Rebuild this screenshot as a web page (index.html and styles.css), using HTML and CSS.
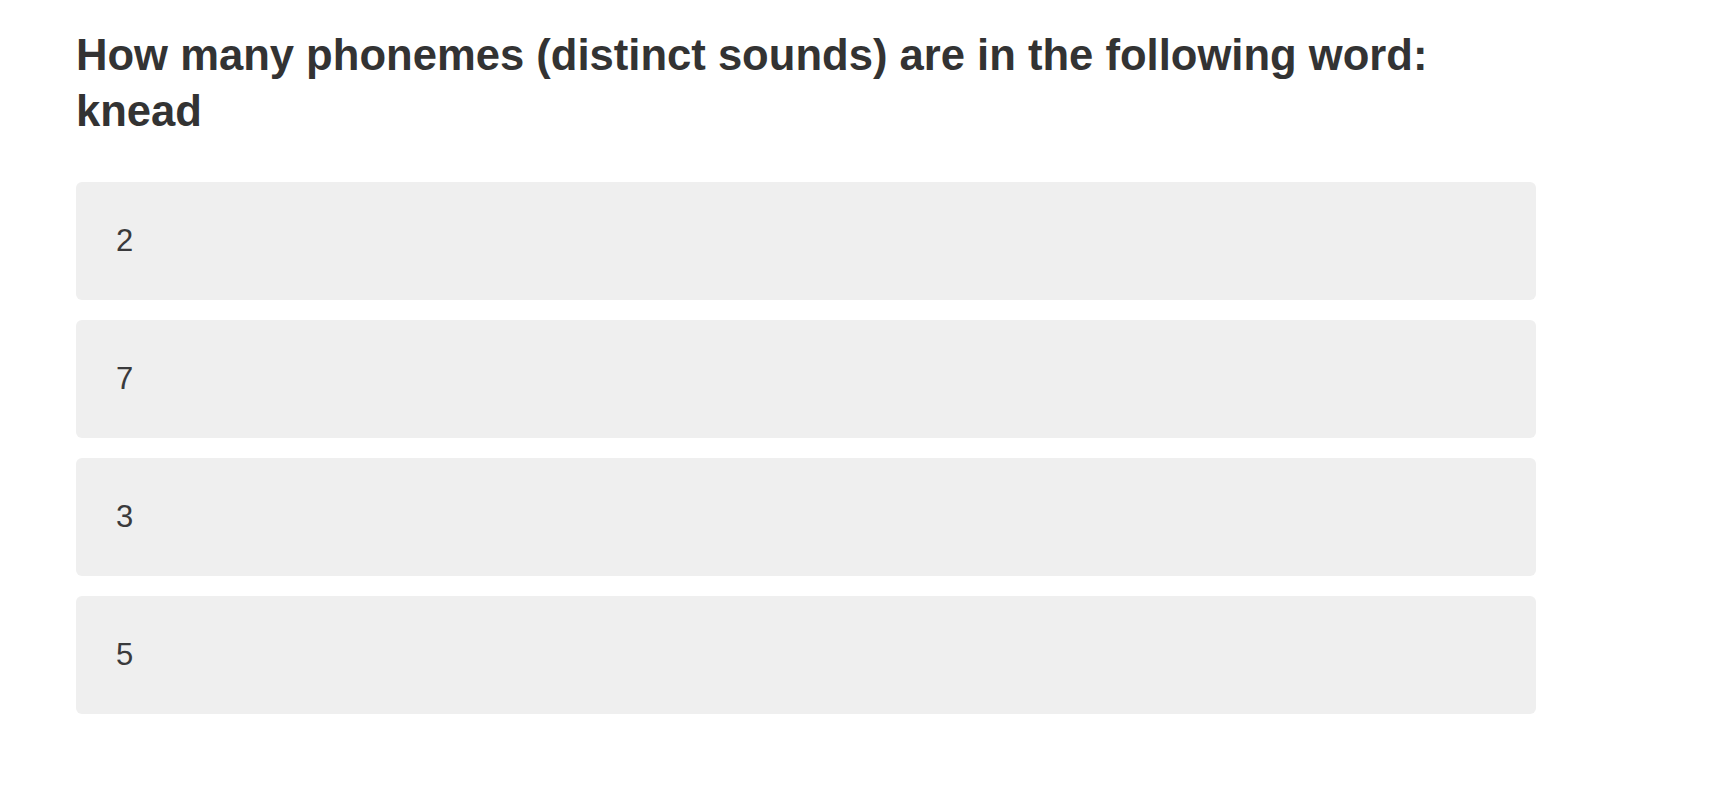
FILE: index.html
```html
<!DOCTYPE html>
<html lang="en">
<head>
    <meta charset="UTF-8">
    <title>Phoneme Quiz</title>
    <link rel="stylesheet" href="styles.css">
</head>
<body>
    <div class="quiz">
        <h2 class="question">How many phonemes (distinct sounds) are in the following word: knead</h2>
        <div class="options">
            <div class="option">2</div>
            <div class="option">7</div>
            <div class="option">3</div>
            <div class="option">5</div>
        </div>
    </div>
</body>
</html>
```
FILE: styles.css
```css
body {
    font-family: 'Liberation Sans', Arial, sans-serif;
    background-color: #fff;
    color: #333;
    margin: 0;
}
.quiz {
    width: 1460px;
    padding: 27px 0 0 76px;
}
.question {
    font-size: 43.6px;
    font-weight: bold;
    line-height: 56px;
    margin: 0 0 43px 0;
    width: 1420px;
}
.options {
    display: flex;
    flex-direction: column;
    gap: 20px;
}
.option {
    background-color: #efefef;
    border-radius: 6px;
    height: 118px;
    padding: 0 40px;
    display: flex;
    align-items: center;
    font-size: 31px;
    color: #3a3a3c;
}
```
